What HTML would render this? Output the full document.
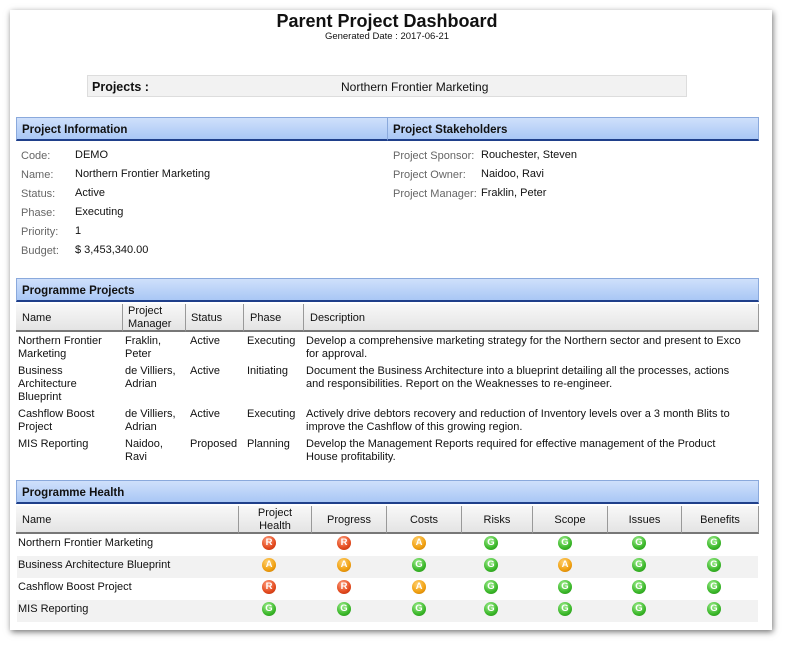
<!DOCTYPE html>
<html><head><meta charset="utf-8"><style>
*{margin:0;padding:0;box-sizing:border-box}
body{width:794px;height:653px;background:#fff;position:relative;overflow:hidden;font-family:"Liberation Sans",sans-serif;font-size:11px;color:#111}
.pg{position:absolute;left:10px;top:10px;width:762px;height:620px;background:#fff;box-shadow:1px 2px 6px rgba(0,0,0,.55)}
.a{position:absolute;white-space:nowrap}
.hdr{position:absolute;height:24px;background:linear-gradient(#cfe0fb,#a9c7f5);border:1px solid #8aa9dc;border-bottom:2px solid #1f3f8a;font-weight:bold;font-size:11.5px;padding:6px 0 0 5px}
.th{position:absolute;background:linear-gradient(#f8f8f8,#e4e4e4);border-right:1px solid #999;border-bottom:2px solid #777;top:0;height:28px;font-size:11px;line-height:13px}
.lbl{color:#666}
.ic{position:absolute;width:14px;height:14px;border-radius:50%;color:#fff;font-size:9.5px;font-weight:bold;text-align:center;line-height:14px;font-family:"Liberation Sans",sans-serif}
.R{background:radial-gradient(circle at 40% 30%,#ffa080,#e34a1e 60%,#b02a0a)}
.A{background:radial-gradient(circle at 40% 30%,#ffd070,#f0a010 60%,#c07000)}
.G{background:radial-gradient(circle at 40% 30%,#a0ee90,#3cb82a 60%,#1f8a14)}
.stripe{position:absolute;left:17px;width:741px;height:22px;background:#f2f2f2}
</style></head><body>
<div class="pg"></div>
<div class="a" style="left:0;width:774px;text-align:center;top:11px;font-size:18px;font-weight:bold">Parent Project Dashboard</div>
<div class="a" style="left:0;width:774px;text-align:center;top:31px;font-size:9.5px">Generated Date : 2017-06-21</div>

<div class="a" style="left:87px;top:75px;width:600px;height:22px;background:#f2f2f2;border:1px solid #ddd"></div>
<div class="a" style="left:92px;top:80px;font-weight:bold;font-size:12.5px">Projects :</div>
<div class="a" style="left:341px;top:80px;font-size:12px">Northern Frontier Marketing</div>

<div class="hdr" style="left:16px;top:117px;width:372px">Project Information</div>
<div class="hdr" style="left:387px;top:117px;width:372px">Project Stakeholders</div>

<div class="a lbl" style="left:21px;top:150px">Code:</div><div class="a" style="left:75px;top:149px">DEMO</div>
<div class="a lbl" style="left:21px;top:169px">Name:</div><div class="a" style="left:75px;top:168px">Northern Frontier Marketing</div>
<div class="a lbl" style="left:21px;top:188px">Status:</div><div class="a" style="left:75px;top:187px">Active</div>
<div class="a lbl" style="left:21px;top:207px">Phase:</div><div class="a" style="left:75px;top:206px">Executing</div>
<div class="a lbl" style="left:21px;top:226px">Priority:</div><div class="a" style="left:75px;top:225px">1</div>
<div class="a lbl" style="left:21px;top:245px">Budget:</div><div class="a" style="left:75px;top:244px">$ 3,453,340.00</div>

<div class="a lbl" style="left:393px;top:150px">Project Sponsor:</div><div class="a" style="left:481px;top:149px">Rouchester, Steven</div>
<div class="a lbl" style="left:393px;top:169px">Project Owner:</div><div class="a" style="left:481px;top:168px">Naidoo, Ravi</div>
<div class="a lbl" style="left:393px;top:188px">Project Manager:</div><div class="a" style="left:481px;top:187px">Fraklin, Peter</div>

<div class="hdr" style="left:16px;top:278px;width:743px">Programme Projects</div>
<div class="a" style="left:16px;top:304px;width:743px;height:29px">
<div class="th" style="left:0;width:107px;padding:8px 0 0 6px">Name</div>
<div class="th" style="left:107px;width:63px;padding:1px 0 0 5px">Project<br>Manager</div>
<div class="th" style="left:170px;width:58px;padding:8px 0 0 5px">Status</div>
<div class="th" style="left:228px;width:60px;padding:8px 0 0 6px">Phase</div>
<div class="th" style="left:288px;width:455px;padding:8px 0 0 6px">Description</div>
</div>
<div class="a" style="left:18px;top:335px;line-height:13px">Northern Frontier<br>Marketing</div>
<div class="a" style="left:125px;top:335px;line-height:13px">Fraklin,<br>Peter</div>
<div class="a" style="left:190px;top:335px">Active</div>
<div class="a" style="left:247px;top:335px">Executing</div>
<div class="a" style="left:306px;top:335px;line-height:13px">Develop a comprehensive marketing strategy for the Northern sector and present to Exco<br>for approval.</div>

<div class="a" style="left:18px;top:365px;line-height:13px">Business<br>Architecture<br>Blueprint</div>
<div class="a" style="left:125px;top:365px;line-height:13px">de Villiers,<br>Adrian</div>
<div class="a" style="left:190px;top:365px">Active</div>
<div class="a" style="left:247px;top:365px">Initiating</div>
<div class="a" style="left:306px;top:365px;line-height:13px">Document the Business Architecture into a blueprint detailing all the processes, actions<br>and responsibilities. Report on the Weaknesses to re-engineer.</div>

<div class="a" style="left:18px;top:408px;line-height:13px">Cashflow Boost<br>Project</div>
<div class="a" style="left:125px;top:408px;line-height:13px">de Villiers,<br>Adrian</div>
<div class="a" style="left:190px;top:408px">Active</div>
<div class="a" style="left:247px;top:408px">Executing</div>
<div class="a" style="left:306px;top:408px;line-height:13px">Actively drive debtors recovery and reduction of Inventory levels over a 3 month Blits to<br>improve the Cashflow of this growing region.</div>

<div class="a" style="left:18px;top:438px">MIS Reporting</div>
<div class="a" style="left:125px;top:438px;line-height:13px">Naidoo,<br>Ravi</div>
<div class="a" style="left:190px;top:438px">Proposed</div>
<div class="a" style="left:247px;top:438px">Planning</div>
<div class="a" style="left:306px;top:438px;line-height:13px">Develop the Management Reports required for effective management of the Product<br>House profitability.</div>

<div class="hdr" style="left:16px;top:480px;width:743px">Programme Health</div>
<div class="a" style="left:16px;top:506px;width:743px;height:28px">
<div class="th" style="left:0;width:223px;padding:8px 0 0 6px">Name</div>
<div class="th" style="left:223px;width:73px;padding:1px 0 0 0;text-align:center">Project<br>Health</div>
<div class="th" style="left:296px;width:75px;padding:8px 0 0 0;text-align:center">Progress</div>
<div class="th" style="left:371px;width:75px;padding:8px 0 0 0;text-align:center">Costs</div>
<div class="th" style="left:446px;width:71px;padding:8px 0 0 0;text-align:center">Risks</div>
<div class="th" style="left:517px;width:75px;padding:8px 0 0 0;text-align:center">Scope</div>
<div class="th" style="left:592px;width:74px;padding:8px 0 0 0;text-align:center">Issues</div>
<div class="th" style="left:666px;width:77px;padding:8px 0 0 0;text-align:center">Benefits</div>
</div>
<div class="stripe" style="top:556px"></div>
<div class="stripe" style="top:600px"></div>
<div class="a" style="left:18px;top:537px">Northern Frontier Marketing</div>
<div class="a" style="left:18px;top:559px">Business Architecture Blueprint</div>
<div class="a" style="left:18px;top:581px">Cashflow Boost Project</div>
<div class="a" style="left:18px;top:603px">MIS Reporting</div>

<div class="ic R" style="left:262px;top:536px">R</div><div class="ic R" style="left:337px;top:536px">R</div><div class="ic A" style="left:412px;top:536px">A</div><div class="ic G" style="left:484px;top:536px">G</div><div class="ic G" style="left:558px;top:536px">G</div><div class="ic G" style="left:632px;top:536px">G</div><div class="ic G" style="left:707px;top:536px">G</div>
<div class="ic A" style="left:262px;top:558px">A</div><div class="ic A" style="left:337px;top:558px">A</div><div class="ic G" style="left:412px;top:558px">G</div><div class="ic G" style="left:484px;top:558px">G</div><div class="ic A" style="left:558px;top:558px">A</div><div class="ic G" style="left:632px;top:558px">G</div><div class="ic G" style="left:707px;top:558px">G</div>
<div class="ic R" style="left:262px;top:580px">R</div><div class="ic R" style="left:337px;top:580px">R</div><div class="ic A" style="left:412px;top:580px">A</div><div class="ic G" style="left:484px;top:580px">G</div><div class="ic G" style="left:558px;top:580px">G</div><div class="ic G" style="left:632px;top:580px">G</div><div class="ic G" style="left:707px;top:580px">G</div>
<div class="ic G" style="left:262px;top:602px">G</div><div class="ic G" style="left:337px;top:602px">G</div><div class="ic G" style="left:412px;top:602px">G</div><div class="ic G" style="left:484px;top:602px">G</div><div class="ic G" style="left:558px;top:602px">G</div><div class="ic G" style="left:632px;top:602px">G</div><div class="ic G" style="left:707px;top:602px">G</div>
</body></html>
